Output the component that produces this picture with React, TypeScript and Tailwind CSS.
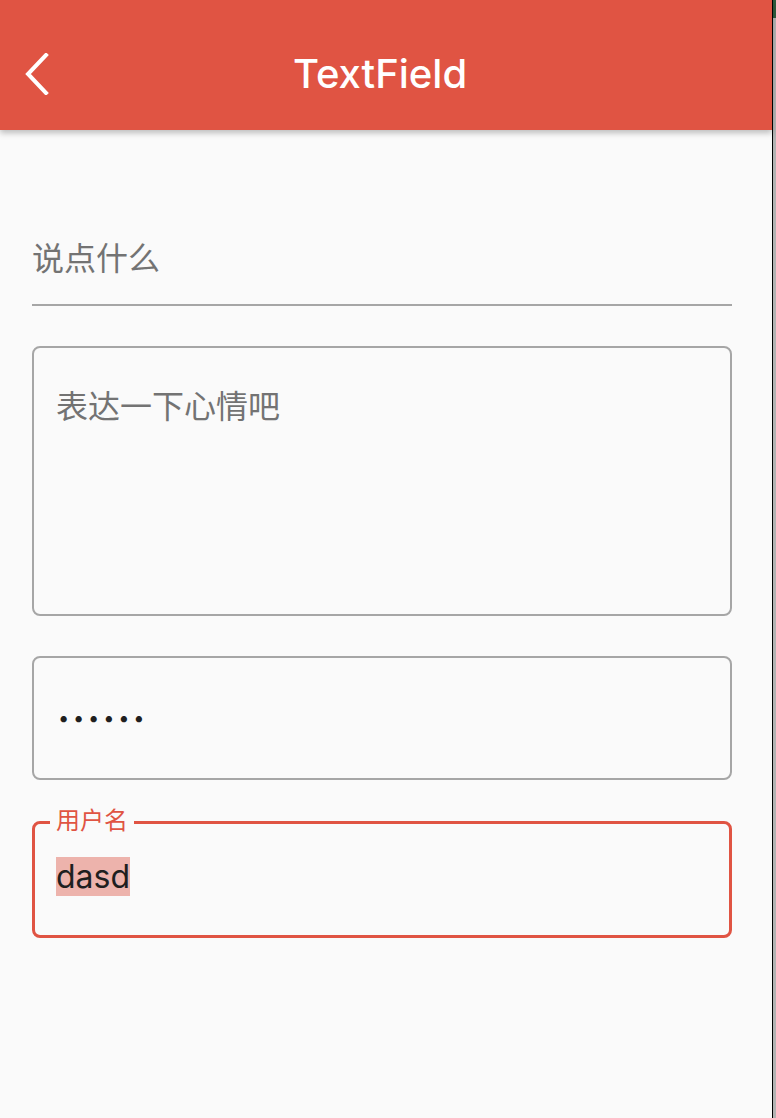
export default function App() {
  return (
    <div className="flex min-h-[1118px] w-[776px] bg-[#fafafa]">
      {/* app surface */}
      <div className="flex w-[772px] flex-col bg-[#fafafa] font-['Inter','Noto_Sans_CJK_SC',sans-serif]">
        {/* ── App bar ── */}
        <header className="relative z-10 h-[130px] bg-[#e05443] pt-[36px] shadow-[0_3px_6px_rgba(0,0,0,0.25)]">
          <div className="grid h-[76px] grid-cols-[64px_1fr_76px] items-center">
            <div className="flex items-center pl-[24px]">
              <svg width="26" height="42" viewBox="0 0 26 42" fill="none">
                <polyline
                  points="22,2 4,21 22,40"
                  stroke="#fff"
                  strokeWidth="4"
                  strokeLinecap="square"
                  strokeLinejoin="miter"
                />
              </svg>
            </div>
            <h1 className="text-center text-[40px] font-medium leading-none text-white">TextField</h1>
            <div />
          </div>
        </header>

        {/* ── Fields ── */}
        <main className="flex flex-col pl-[32px] pr-[40px] pt-[109px]">
          {/* underline field */}
          <div className="border-b-2 border-[#a6a6a6] pb-[25px] text-[32px] leading-[40px] text-[#737373]">
            说点什么
          </div>

          {/* multiline outlined */}
          <div className="mt-[40px] h-[270px] rounded-[8px] border-2 border-[#a6a6a6] pl-[22px] pt-[39px] text-[32px] leading-[40px] text-[#737373]">
            表达一下心情吧
          </div>

          {/* password */}
          <div className="mt-[40px] flex h-[124px] items-center rounded-[8px] border-2 border-[#a6a6a6] pl-[24px] text-[20px] leading-[40px] tracking-[3.8px] text-[#1f1f1f]">
            ••••••
          </div>

          {/* focused with label */}
          <div className="relative mt-[41px] h-[117px] rounded-[8px] border-[3px] border-[#e05443] pl-[21px] pt-[34px]">
            <span className="absolute left-[15px] top-[-15px] bg-[#fafafa] px-[6px] text-[24px] leading-[24px] text-[#e05443]">
              用户名
            </span>
            <span className="bg-[#edb3ac] text-[32px] leading-[38px] text-[#1f1f1f]">dasd</span>
          </div>
        </main>
      </div>

      {/* window edge */}
      <div className="w-px bg-black" />
      <div className="flex w-[3px] flex-col bg-[#b3b3b3]">
        <div className="h-[18px] bg-[#2f5a3c]" />
      </div>
    </div>
  );
}
